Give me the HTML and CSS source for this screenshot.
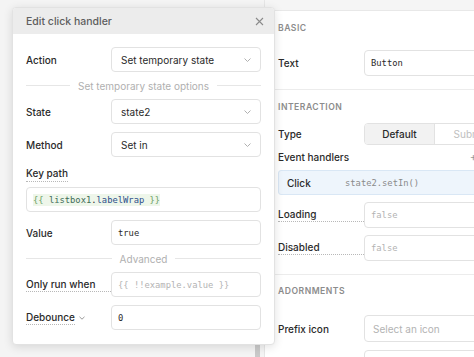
FILE: index.html
```html
<!DOCTYPE html>
<html lang="en">
<head>
  <meta charset="UTF-8">
  <meta name="viewport" content="width=device-width, initial-scale=1.0">
  <title>Edit click handler</title>
  <link rel="stylesheet" href="styles.css">
</head>
<body>
  <div class="app">
    <div class="canvas">
      <div class="scroll-thumb"></div>
    </div>

    <aside class="inspector">
      <div class="inspector-top"></div>

      <section class="group">
        <h2>Basic</h2>
        <div class="row row-text">
          <label>Text</label>
          <div class="field mono">Button</div>
        </div>
      </section>

      <section class="group">
        <h2>Interaction</h2>
        <div class="row row-type">
          <label>Type</label>
          <div class="segmented">
            <span class="seg active">Default</span>
            <span class="seg">Submit</span>
          </div>
        </div>
        <div class="row row-short">
          <label>Event handlers</label>
          <span class="add">+</span>
        </div>
        <div class="handler">
          <span class="handler-event">Click</span>
          <span class="mono handler-method">state2.setIn()</span>
        </div>
        <div class="row">
          <label class="dotted">Loading</label>
          <div class="field mono placeholder">false</div>
        </div>
        <div class="row">
          <label class="dotted">Disabled</label>
          <div class="field mono placeholder">false</div>
        </div>
      </section>

      <section class="group group-last">
        <h2>Adornments</h2>
        <div class="row row-tall row-prefix">
          <label>Prefix icon</label>
          <div class="field field-tall placeholder">Select an icon</div>
        </div>
        <div class="row row-tall row-suffix">
          <label class="dotted">Suffix icon</label>
          <div class="field field-tall placeholder">Select an icon</div>
        </div>
      </section>
    </aside>

    <div class="modal">
      <div class="modal-header">
        <span>Edit click handler</span>
        <svg class="close" width="9" height="9" viewBox="0 0 9 9"><path d="M1 1l7 7M8 1l-7 7" stroke="#8a8a8a" stroke-width="1.1" fill="none"/></svg>
      </div>
      <div class="modal-body">
        <div class="mrow">
          <label>Action</label>
          <div class="select">Set temporary state
            <svg class="chev" width="7" height="4" viewBox="0 0 7 4"><path d="M0.5 0.5l3 3 3-3" stroke="#b0b0b0" fill="none"/></svg>
          </div>
        </div>
        <div class="divider"><span>Set temporary state options</span></div>
        <div class="mrow">
          <label>State</label>
          <div class="select">state2
            <svg class="chev" width="7" height="4" viewBox="0 0 7 4"><path d="M0.5 0.5l3 3 3-3" stroke="#b0b0b0" fill="none"/></svg>
          </div>
        </div>
        <div class="mrow">
          <label>Method</label>
          <div class="select">Set in
            <svg class="chev" width="7" height="4" viewBox="0 0 7 4"><path d="M0.5 0.5l3 3 3-3" stroke="#b0b0b0" fill="none"/></svg>
          </div>
        </div>
        <div class="stack">
          <label class="dotted">Key path</label>
          <div class="code-input mono">
            <span class="expr"><span class="brace">{{</span> <span class="ident">listbox1</span>.<span class="prop">labelWrap</span> <span class="brace">}}</span></span>
          </div>
        </div>
        <div class="mrow">
          <label>Value</label>
          <div class="input mono">true</div>
        </div>
        <div class="divider"><span>Advanced</span></div>
        <div class="mrow">
          <label class="dotted">Only run when</label>
          <div class="input mono placeholder">{{ !!example.value }}</div>
        </div>
        <div class="mrow">
          <label><span class="dotted">Debounce</span>
            <svg class="label-chev" width="6" height="4" viewBox="0 0 6 4"><path d="M0.5 0.8l2.5 2.4 2.5-2.4" stroke="#9a9a9a" fill="none"/></svg>
          </label>
          <div class="input mono">0</div>
        </div>
      </div>
    </div>
  </div>
</body>
</html>
```

FILE: styles.css
```css
* {
  margin: 0;
  padding: 0;
  box-sizing: border-box;
}

html, body {
  height: 100%;
  overflow: hidden;
}

body {
  font-family: Inter, "Noto Sans", sans-serif;
  font-size: 10px;
  color: #2a2a2a;
  background-color: #f4f4f4;
}

.mono {
  font-family: "DejaVu Sans Mono", "Liberation Mono", monospace;
  font-size: 8.8px;
}

.placeholder {
  color: #b3b3b3;
}

.dotted {
  border-bottom: 1px dotted #b8b8b8;
  padding-bottom: 1px;
}

label {
  font-weight: 500;
}

.app {
  position: relative;
  display: flex;
  height: 100%;
}

/* canvas behind the popover */
.canvas {
  width: 264px;
  flex-shrink: 0;
  display: flex;
  justify-content: flex-end;
  align-items: flex-end;
  padding-right: 4px;
}

.scroll-thumb {
  width: 5px;
  height: 16px;
  background-color: #c9c9c9;
}

/* right inspector */
.inspector {
  flex: 1;
  background-color: #fff;
  border-left: 1px solid #e6e6e6;
  min-width: 0;
}

.inspector-top {
  height: 11px;
  background-color: #f5f5f5;
  border-bottom: 1px solid #e8e8e8;
}

.group {
  padding: 12px 0 13px 13px;
  border-bottom: 1px solid #ececec;
  display: flex;
  flex-direction: column;
  gap: 7px;
}

.group-last {
  padding-top: 11px;
  border-bottom: none;
}

.group h2 {
  font-size: 8.6px;
  font-weight: 600;
  letter-spacing: 0.5px;
  text-transform: uppercase;
  color: #8c8c8c;
  height: 11px;
  line-height: 11px;
}

.row {
  display: flex;
  align-items: center;
  height: 26px;
}

.row > label {
  width: 86px;
  flex-shrink: 0;
}

.row-text {
  margin-top: 9px;
}

.row-type {
  height: 22px;
  margin-top: 3px;
}

.row-short {
  height: 14px;
  margin-top: -2px;
  margin-bottom: -1px;
}

.row-short > label {
  width: auto;
}

.add {
  margin-left: auto;
  margin-right: -3px;
  color: #999;
  font-size: 11px;
}

.field {
  flex-shrink: 0;
  width: 160px;
  height: 26px;
  border: 1px solid #e2e2e2;
  border-radius: 4px;
  display: flex;
  align-items: center;
  padding-left: 6px;
}

.field-tall {
  height: 27px;
  padding-left: 8px;
  font-size: 10px;
}

.row-tall {
  height: 27px;
}

.row-prefix {
  margin-top: 11px;
}

.row-suffix {
  margin-top: 1px;
}

.segmented {
  flex-shrink: 0;
  display: flex;
  height: 22px;
  border: 1px solid #e2e2e2;
  border-radius: 4px;
  overflow: hidden;
}

.seg {
  width: 70px;
  display: flex;
  align-items: center;
  justify-content: center;
  color: #c0c0c0;
}

.seg.active {
  background-color: #f2f2f2;
  color: #2a2a2a;
  font-weight: 500;
  border-right: 1px solid #e2e2e2;
}

.handler {
  display: flex;
  align-items: center;
  height: 25px;
  margin-right: -10px;
  background-color: #eef5fc;
  border: 1px solid #d9e7f5;
  border-radius: 3px;
  padding-left: 8px;
}

.handler-event {
  width: 58px;
  font-weight: 500;
}

.handler-method {
  color: #8a8a8a;
}

/* popover */
.modal {
  position: absolute;
  left: 12px;
  top: 7px;
  width: 263px;
  background-color: #fff;
  border: 1px solid #e2e2e2;
  border-radius: 4px;
  box-shadow: 0 2px 10px rgba(0, 0, 0, 0.12);
}

.modal-header {
  height: 26px;
  background-color: #ececec;
  border-radius: 3px 3px 0 0;
  display: flex;
  align-items: center;
  justify-content: space-between;
  padding: 0 10px 0 13px;
  font-size: 10.5px;
  font-weight: 500;
  color: #5e5e5e;
}

.modal-body {
  padding: 13px 13px 14px 13px;
  display: flex;
  flex-direction: column;
  gap: 8px;
}

.mrow {
  display: flex;
  align-items: center;
  height: 25px;
}

.mrow > label {
  width: 85px;
  flex-shrink: 0;
  display: flex;
  align-items: center;
  gap: 4px;
}

.select,
.input {
  flex: 1;
  height: 25px;
  border: 1px solid #e2e2e2;
  border-radius: 4px;
  display: flex;
  align-items: center;
}

.select {
  padding: 0 9px;
  justify-content: space-between;
}

.input {
  padding-left: 6px;
}

.divider {
  height: 11px;
  display: flex;
  align-items: center;
  gap: 8px;
  color: #b0b0b0;
}

.divider::before,
.divider::after {
  content: "";
  flex: 1;
  height: 1px;
  background-color: #e6e6e6;
}

.stack {
  display: flex;
  flex-direction: column;
  align-items: flex-start;
  gap: 5px;
  margin-top: 2px;
}

.stack label {
  line-height: 13px;
}

.code-input {
  align-self: stretch;
  height: 25px;
  border: 1px solid #e2e2e2;
  border-radius: 4px;
  display: flex;
  align-items: center;
  padding-left: 6px;
}

.expr {
  background-color: #eef6ea;
  padding: 1px 0;
}

.brace {
  color: #6aa063;
}

.ident {
  color: #3f6d58;
}

.prop {
  color: #2d4f8a;
}
```
